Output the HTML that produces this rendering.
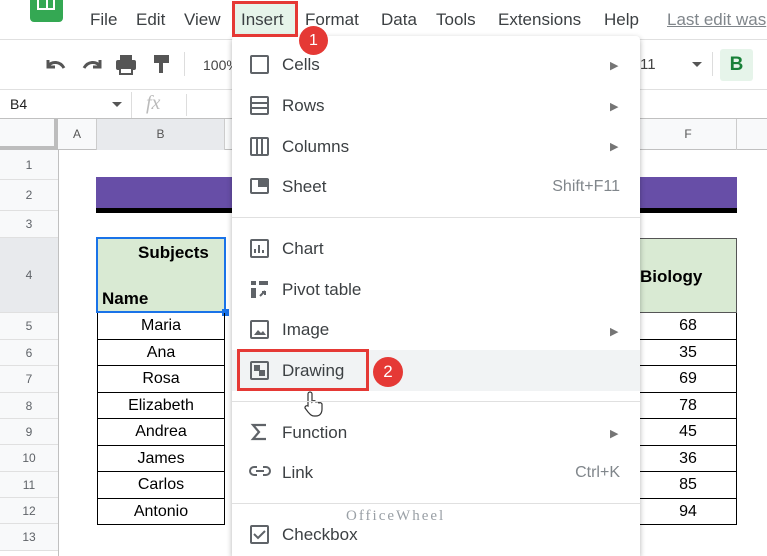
<!DOCTYPE html>
<html style="width:767px;height:556px;overflow:hidden"><head><style>
*{margin:0;padding:0;box-sizing:border-box}
body{width:767px;height:556px;overflow:hidden;background:#fff;font-family:"Liberation Sans",Arial,sans-serif;position:relative}
.a{position:absolute}
.menu span{position:absolute;top:10px;font-size:17px;color:#3c4043}
.rh{position:absolute;left:0;width:58px;text-align:center;font-size:12px;color:#5f6368;border-bottom:1px solid #e0e0e0;background:#f8f9fa}
.cell{position:absolute;left:97px;width:128px;text-align:center;font-size:16px;color:#000;border:1px solid #000;border-top:none;height:26.5px;line-height:26px}
.cf{position:absolute;left:640px;width:97px;text-align:center;font-size:16px;border:1px solid #000;border-top:none;border-left:none;height:26.5px;line-height:26px}
.mi{position:absolute;left:282px;font-size:17px;color:#3c4043}
.arr{position:absolute;left:610px;font-size:11px;color:#757575}
.sc{position:absolute;right:147px;font-size:16px;color:#80868b}
.div{position:absolute;left:232px;width:408px;height:1px;background:#e0e0e0}
</style></head><body>
<div class="a" style="left:30px;top:0;width:33px;height:22px;background:#34a853;border-radius:0 0 4px 4px"></div>
<div class="a" style="left:37px;top:0;width:18px;height:10px;border:2px solid #fff;border-top:none"></div>
<div class="a" style="left:46px;top:0;width:2px;height:10px;background:#fff"></div>
<div class="a" style="left:232px;top:1px;width:66px;height:36px;background:#e6f4ea"></div>
<div class="a menu" style="left:0;top:0;width:767px;height:40px">
<span style="left:90px">File</span><span style="left:136px">Edit</span><span style="left:184px">View</span><span style="left:241px">Insert</span><span style="left:305px">Format</span><span style="left:381px">Data</span><span style="left:436px">Tools</span><span style="left:498px">Extensions</span><span style="left:604px">Help</span><span style="left:667px;color:#80868b;text-decoration:underline">Last edit was</span>
</div>
<div class="a" style="left:0;top:39px;width:767px;height:1px;background:#e0e0e0"></div>
<svg class="a" style="left:40px;top:52px" width="140" height="26" fill="none" stroke="#555" stroke-width="3">
<path d="M8 8v7h7M8 14c4-5 12-5 16 2"/>
<path d="M60 8v7h-7M60 14c-4-5-12-5-16 2"/>
<rect x="76" y="8" width="20" height="10" rx="2" fill="#555" stroke="none"/><rect x="80" y="3" width="12" height="5" fill="#555" stroke="none"/><rect x="80" y="16" width="12" height="6" fill="#fff" stroke="#555" stroke-width="2"/>
<rect x="114" y="3" width="15" height="8" fill="#555" stroke="none"/><rect x="119" y="11" width="4" height="10" fill="#555" stroke="none"/>
</svg>
<div class="a" style="left:184px;top:52px;width:1px;height:24px;background:#ddd"></div>
<div class="a" style="left:203px;top:57px;font-size:14px;color:#444">100%</div>
<div class="a" style="left:640px;top:56px;font-size:15px;color:#444">11</div>
<div class="a" style="left:692px;top:62px;border:5px solid transparent;border-top:5px solid #555"></div>
<div class="a" style="left:712px;top:52px;width:1px;height:24px;background:#ddd"></div>
<div class="a" style="left:720px;top:49px;width:33px;height:32px;background:#e6f4ea;border-radius:3px;color:#188038;font-weight:bold;font-size:19px;text-align:center;line-height:32px">B</div>
<div class="a" style="left:0;top:89px;width:767px;height:1px;background:#e0e0e0"></div>
<div class="a" style="left:10px;top:96px;font-size:14px;color:#222">B4</div>
<div class="a" style="left:112px;top:102px;border:5px solid transparent;border-top:5px solid #555"></div>
<div class="a" style="left:131px;top:92px;width:1px;height:26px;background:#ddd"></div>
<div class="a" style="left:146px;top:92px;font-size:20px;font-style:italic;color:#bbb;font-family:'Liberation Serif',serif">fx</div>
<div class="a" style="left:186px;top:94px;width:1px;height:22px;background:#ddd"></div>
<div class="a" style="left:0;top:118px;width:767px;height:1px;background:#c0c0c0"></div>
<div class="a" style="left:0;top:119px;width:767px;height:31px;background:#f8f9fa;border-bottom:1px solid #c0c0c0"></div>
<div class="a" style="left:0;top:119px;width:58px;height:31px;border-right:4px solid #bdbdbd;border-bottom:4px solid #bdbdbd"></div>
<div class="a" style="left:58px;top:119px;width:39px;height:31px;border-right:1px solid #ccc;text-align:center;line-height:31px;font-size:12px;color:#555">A</div>
<div class="a" style="left:97px;top:119px;width:128px;height:31px;border-right:1px solid #ccc;text-align:center;line-height:31px;font-size:12px;color:#555;background:#e8eaed">B</div>
<div class="a" style="left:640px;top:119px;width:97px;height:31px;border-right:1px solid #ccc;text-align:center;line-height:31px;font-size:12px;color:#555">F</div>
<div class="a" style="left:58px;top:150px;width:1px;height:406px;background:#c0c0c0"></div>
<div class="rh" style="top:150px;height:30px;line-height:30px">1</div>
<div class="rh" style="top:180px;height:31px;line-height:31px">2</div>
<div class="rh" style="top:211px;height:27px;line-height:27px">3</div>
<div class="rh" style="top:238px;height:75px;line-height:75px;background:#e8eaed">4</div>
<div class="rh" style="top:313px;height:27px;line-height:27px">5</div>
<div class="rh" style="top:340px;height:26px;line-height:26px">6</div>
<div class="rh" style="top:366px;height:27px;line-height:27px">7</div>
<div class="rh" style="top:393px;height:26px;line-height:26px">8</div>
<div class="rh" style="top:419px;height:26px;line-height:26px">9</div>
<div class="rh" style="top:445px;height:27px;line-height:27px">10</div>
<div class="rh" style="top:472px;height:26px;line-height:26px">11</div>
<div class="rh" style="top:498px;height:26px;line-height:26px">12</div>
<div class="rh" style="top:524px;height:27px;line-height:27px">13</div>
<div class="a" style="left:96px;top:177px;width:641px;height:31px;background:#674ea7"></div>
<div class="a" style="left:96px;top:208px;width:641px;height:5px;background:#000"></div>
<div class="a" style="left:96px;top:237px;width:130px;height:76px;background:#d9ead3;border:2px solid #1a73e8"></div>
<div class="a" style="left:138px;top:243px;font-size:17px;font-weight:bold">Subjects</div>
<div class="a" style="left:102px;top:289px;font-size:17px;font-weight:bold">Name</div>
<div class="a" style="left:222px;top:309px;width:7px;height:7px;background:#1a73e8"></div>
<div class="a" style="left:640px;top:238px;width:97px;height:75px;background:#d9ead3;border:1px solid #555;border-left:none;font-weight:bold;font-size:17px;line-height:75px">Biology</div>
<div class="cell" style="top:313px">Maria</div><div class="cf" style="top:313px">68</div>
<div class="cell" style="top:339.5px">Ana</div><div class="cf" style="top:339.5px">35</div>
<div class="cell" style="top:366px">Rosa</div><div class="cf" style="top:366px">69</div>
<div class="cell" style="top:392.5px">Elizabeth</div><div class="cf" style="top:392.5px">78</div>
<div class="cell" style="top:419px">Andrea</div><div class="cf" style="top:419px">45</div>
<div class="cell" style="top:445.5px">James</div><div class="cf" style="top:445.5px">36</div>
<div class="cell" style="top:472px">Carlos</div><div class="cf" style="top:472px">85</div>
<div class="cell" style="top:498.5px">Antonio</div><div class="cf" style="top:498.5px">94</div>
<div class="a" style="left:232px;top:36px;width:408px;height:520px;background:#fff;border-radius:4px 4px 0 0;box-shadow:0 2px 6px rgba(0,0,0,.3)"></div>
<div class="a" style="left:232px;top:350px;width:408px;height:41px;background:#f1f3f4"></div>
<svg class="a" style="left:0;top:0" width="767" height="556" fill="none" stroke="#5f6368" stroke-width="2">
<rect x="251" y="56" width="17" height="17" rx="1"/>
<rect x="251" y="97" width="17" height="17" rx="1"/><path d="M251 103h17M251 108h17"/>
<rect x="251" y="138" width="17" height="17" rx="1"/><path d="M257 138v17M262 138v17"/>
<rect x="251" y="179" width="17" height="14" rx="1"/><path d="M259 180h9v6h-9z" fill="#5f6368"/>
<rect x="251" y="240" width="17" height="17" rx="1"/><path d="M255 253v-4M259 253v-8M263 253v-3"/>
<path d="M251 281h5v4h-5zM259 281h9v4h-9zM251 288h5v10h-5z" fill="#5f6368" stroke="none"/><path d="M260 296l5-5M262 292h3v3"/>
<rect x="251" y="321" width="17" height="17" rx="1"/><path d="M254 335l4-5 3 3 2-2 3 4z" fill="#5f6368" stroke="none"/>
<rect x="251" y="362" width="17" height="17" rx="1"/><rect x="254" y="365" width="6" height="6" fill="#5f6368" stroke="none"/><rect x="259" y="370" width="6" height="6" fill="#5f6368" stroke="none"/>
<path d="M266 425h-13l6 7-6 7h13" stroke-width="2.2"/>
<path d="M257 467h-3a4 4 0 0 0 0 8h3M263 467h3a4 4 0 0 1 0 8h-3M256 471h8"/>
<rect x="251" y="526" width="17" height="17" rx="1"/><path d="M254 534l4 4 7-7"/>
<path d="M308 406v-12a2 2 0 0 1 4 0v8l1-1a2 2 0 0 1 3 1 2 2 0 0 1 3 1 2 2 0 0 1 3 1v5c0 4-2 7-6 7h-2c-3 0-4-2-6-4l-3-4a2 2 0 0 1 3-2z" fill="#fff" stroke="#333" stroke-width="1.2"/>
</svg>
<div class="mi" style="top:55px">Cells</div><div class="arr" style="top:59px">▶</div>
<div class="mi" style="top:96px">Rows</div><div class="arr" style="top:100px">▶</div>
<div class="mi" style="top:137px">Columns</div><div class="arr" style="top:140px">▶</div>
<div class="mi" style="top:177px">Sheet</div><div class="sc" style="top:178px">Shift+F11</div>
<div class="div" style="top:217px"></div>
<div class="mi" style="top:239px">Chart</div>
<div class="mi" style="top:280px">Pivot table</div>
<div class="mi" style="top:320px">Image</div><div class="arr" style="top:325px">▶</div>
<div class="mi" style="top:361px">Drawing</div>
<div class="div" style="top:401px"></div>
<div class="mi" style="top:423px">Function</div><div class="arr" style="top:427px">▶</div>
<div class="mi" style="top:463px">Link</div><div class="sc" style="top:464px">Ctrl+K</div>
<div class="div" style="top:503px"></div>
<div class="mi" style="top:525px">Checkbox</div>
<div class="a" style="left:346px;top:508px;font-family:'Liberation Serif',serif;font-size:15px;letter-spacing:2px;color:#9aa0a6">OfficeWheel</div>
<div class="a" style="left:232px;top:1px;width:66px;height:36px;border:3px solid #e53935"></div>
<div class="a" style="left:299px;top:26px;width:29px;height:29px;border-radius:50%;background:#e53935;color:#fff;font-size:16px;text-align:center;line-height:29px">1</div>
<div class="a" style="left:237px;top:349px;width:132px;height:42px;border:3px solid #e53935"></div>
<div class="a" style="left:373px;top:357px;width:30px;height:30px;border-radius:50%;background:#e53935;color:#fff;font-size:17px;text-align:center;line-height:30px">2</div>
</body></html>
